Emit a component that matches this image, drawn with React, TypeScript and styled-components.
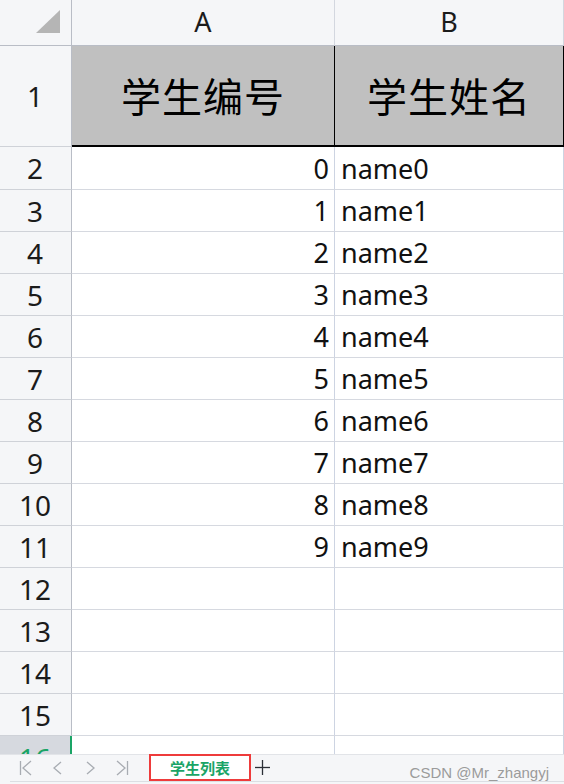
import React from "react";
import styled, { createGlobalStyle } from "styled-components";

const Global = createGlobalStyle`
  html, body { margin: 0; padding: 0; background: #ffffff; overflow: hidden; }
  * { box-sizing: border-box; }
`;

const LATIN = `"Noto Sans", "Open Sans", "Liberation Sans", sans-serif`;
const CJK = `"Noto Sans CJK SC", "Noto Sans", sans-serif`;
const GREEN = "#1aa466";

const Page = styled.div`
  position: relative;
  width: 564px;
  height: 784px;
  display: flex;
  flex-direction: column;
  overflow: hidden;
  background: #ffffff;
`;

const Sheet = styled.div`
  flex: 1;
  overflow: hidden;
  display: flex;
  flex-direction: column;
`;

const Row = styled.div<{ $h: number }>`
  flex: none;
  display: grid;
  grid-template-columns: 72px 263px 1fr;
  height: ${(p) => p.$h}px;
`;

const Corner = styled.div`
  background: #f5f6f8;
  border-right: 1px solid #b9bdc6;
  border-bottom: 1px solid #b9bdc6;
  display: flex;
  align-items: flex-end;
  justify-content: flex-end;
  padding: 0 11px 12px 0;
`;

const ColHead = styled.div`
  background: #f5f6f8;
  border-right: 1px solid #d3d7df;
  border-bottom: 1px solid #b9bdc6;
  display: flex;
  align-items: center;
  justify-content: center;
  font-family: ${LATIN};
  font-size: 27px;
  color: #1b1b1b;
  padding-bottom: 2px;
`;

const RowHead = styled.div<{ $active?: boolean }>`
  background: ${(p) => (p.$active ? "#d6d9df" : "#f5f6f8")};
  border-right: ${(p) => (p.$active ? `2px solid ${GREEN}` : "1px solid #b9bdc6")};
  border-bottom: 1px solid #cfd2d8;
  display: flex;
  align-items: ${(p) => (p.$active ? "flex-start" : "center")};
  justify-content: center;
  padding-right: ${(p) => (p.$active ? "0" : "1px")};
  padding-top: ${(p) => (p.$active ? "3px" : "0")};
  font-family: ${LATIN};
  font-size: 28px;
  color: ${(p) => (p.$active ? GREEN : "#1b1b1b")};
`;

const TitleCell = styled.div`
  background: #c0c0c0;
  border-right: 1px solid #000000;
  border-bottom: 2px solid #000000;
  display: flex;
  align-items: center;
  justify-content: center;
  font-family: ${CJK};
  font-size: 40px;
  letter-spacing: 1px;
  color: #000000;
  padding-bottom: 2px;
`;

const Cell = styled.div<{ $num?: boolean }>`
  border-right: 1px solid #cdd4e2;
  border-bottom: 1px solid #d6d9e0;
  display: flex;
  align-items: center;
  justify-content: ${(p) => (p.$num ? "flex-end" : "flex-start")};
  padding: 0 ${(p) => (p.$num ? "5px" : "0")} 0 ${(p) => (p.$num ? "0" : "6px")};
  font-family: ${LATIN};
  font-size: 27px;
  color: #111111;
`;

const TabBar = styled.div`
  flex: none;
  height: 30px;
  background: #f5f6f8;
  border-top: 1px solid #e2e4e8;
  display: flex;
  align-items: flex-start;
  padding-left: 10px;
`;

const TabStrip = styled.div`
  height: 28px;
  width: 100%;
  display: flex;
  align-items: center;
  border-bottom: 1px solid #dcdee3;
  margin-top: -1px;
`;

const NavButton = styled.div`
  width: 32px;
  height: 27px;
  display: flex;
  align-items: center;
  justify-content: center;
  margin-top: 1px;
`;

const SheetTab = styled.div`
  margin-left: 11px;
  width: 102px;
  height: 27px;
  border: 2px solid #ee3b3b;
  background: #ffffff;
  display: flex;
  align-items: center;
  justify-content: center;
  font-family: ${CJK};
  font-weight: 700;
  font-size: 15px;
  color: ${GREEN};
  align-self: flex-start;
`;

const AddButton = styled.div`
  width: 22px;
  height: 27px;
  display: flex;
  align-items: center;
  justify-content: center;
`;

const Watermark = styled.div`
  position: absolute;
  right: 15px;
  bottom: 3px;
  font-family: "Liberation Sans", Arial, sans-serif;
  font-size: 15px;
  color: #9b9b9b;
  pointer-events: none;
`;

const NavIcon: React.FC<{ kind: "first" | "prev" | "next" | "last" }> = ({ kind }) => {
  const stroke = "#a8acb2";
  return (
    <svg width="14" height="16" viewBox="0 0 14 16" fill="none">
      {kind === "first" && (
        <>
          <line x1="1.5" y1="1" x2="1.5" y2="15" stroke={stroke} strokeWidth="1.3" />
          <polyline points="12,1 4,8 12,15" stroke={stroke} strokeWidth="1.3" />
        </>
      )}
      {kind === "prev" && <polyline points="10,2 3,8 10,14" stroke={stroke} strokeWidth="1.3" />}
      {kind === "next" && <polyline points="4,2 11,8 4,14" stroke={stroke} strokeWidth="1.3" />}
      {kind === "last" && (
        <>
          <polyline points="2,1 10,8 2,15" stroke={stroke} strokeWidth="1.3" />
          <line x1="12.5" y1="1" x2="12.5" y2="15" stroke={stroke} strokeWidth="1.3" />
        </>
      )}
    </svg>
  );
};

const PlusIcon = () => (
  <svg width="17" height="17" viewBox="0 0 17 17" fill="none">
    <line x1="8.5" y1="1" x2="8.5" y2="16" stroke="#2b2f36" strokeWidth="1.3" />
    <line x1="1" y1="8.5" x2="16" y2="8.5" stroke="#2b2f36" strokeWidth="1.3" />
  </svg>
);

const CornerTriangle = () => (
  <svg width="24" height="23" viewBox="0 0 24 23">
    <polygon points="0,23 24,0 24,23" fill="#b5b5b5" />
  </svg>
);

const data = Array.from({ length: 10 }, (_, i) => ({ id: i, name: `name${i}` }));

export default function App() {
  const rows: { n: number; a?: string; b?: string }[] = [];
  data.forEach((d, i) => rows.push({ n: i + 2, a: String(d.id), b: d.name }));
  for (let n = 12; n <= 16; n++) rows.push({ n });

  return (
    <>
      <Global />
      <Page>
        <Sheet>
          <Row $h={46}>
            <Corner>
              <CornerTriangle />
            </Corner>
            <ColHead>A</ColHead>
            <ColHead>B</ColHead>
          </Row>
          <Row $h={101}>
            <RowHead>1</RowHead>
            <TitleCell>学生编号</TitleCell>
            <TitleCell>学生姓名</TitleCell>
          </Row>
          {rows.map((r) => (
            <Row key={r.n} $h={r.n === 2 ? 43 : 42}>
              <RowHead $active={r.n === 16}>{r.n}</RowHead>
              <Cell $num>{r.a}</Cell>
              <Cell>{r.b}</Cell>
            </Row>
          ))}
        </Sheet>
        <TabBar>
          <TabStrip>
            <NavButton>
              <NavIcon kind="first" />
            </NavButton>
            <NavButton>
              <NavIcon kind="prev" />
            </NavButton>
            <NavButton>
              <NavIcon kind="next" />
            </NavButton>
            <NavButton>
              <NavIcon kind="last" />
            </NavButton>
            <SheetTab>学生列表</SheetTab>
            <AddButton>
              <PlusIcon />
            </AddButton>
          </TabStrip>
        </TabBar>
        <Watermark>CSDN @Mr_zhangyj</Watermark>
      </Page>
    </>
  );
}
